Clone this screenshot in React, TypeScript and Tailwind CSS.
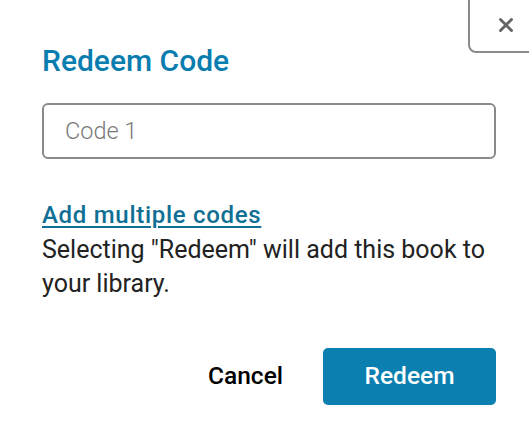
import { X } from "lucide-react";

export default function App() {
  return (
    <div className="relative h-[443px] w-[529px] overflow-hidden bg-white font-['Roboto',sans-serif]">
      <button
        type="button"
        aria-label="Close"
        className="absolute -top-[4px] left-[468px] flex h-[57px] w-[80px] items-start rounded-bl-[8px] border-2 border-[#8a8a8a] bg-white pl-[25px] pt-[16px] text-[#666]"
      >
        <X size={22} strokeWidth={3.2} />
      </button>
      <div className="flex flex-col pl-[42px] pr-[33px] pt-[43px]">
        <h2 className="text-[30px] font-medium leading-[36px] text-[#0a7db0]">Redeem Code</h2>
        <input
          type="text"
          placeholder="Code 1"
          className="mt-[24px] h-[56px] w-full rounded-[6px] border-2 border-[#8a8a8a] px-[21px] text-[23.5px] font-light placeholder:text-[#7a7a7a]"
        />
        <a
          href="#"
          className="mt-[42px] self-start text-[24px] font-medium leading-[28px] tracking-[0.7px] text-[#0f6f94] underline decoration-2 underline-offset-[3px]"
        >
          Add multiple codes
        </a>
        <p className="mt-[4px] text-[25px] leading-[34px] text-[#222]">
          Selecting "Redeem" will add this book to your library.
        </p>
        <div className="mt-[47px] flex items-center justify-end gap-[40px]">
          <button type="button" className="text-[24.5px] font-medium text-black">
            Cancel
          </button>
          <button
            type="button"
            className="h-[57px] w-[173px] rounded-[5px] bg-[#0a7fb0] text-[24.5px] font-medium text-white"
          >
            Redeem
          </button>
        </div>
      </div>
    </div>
  );
}
